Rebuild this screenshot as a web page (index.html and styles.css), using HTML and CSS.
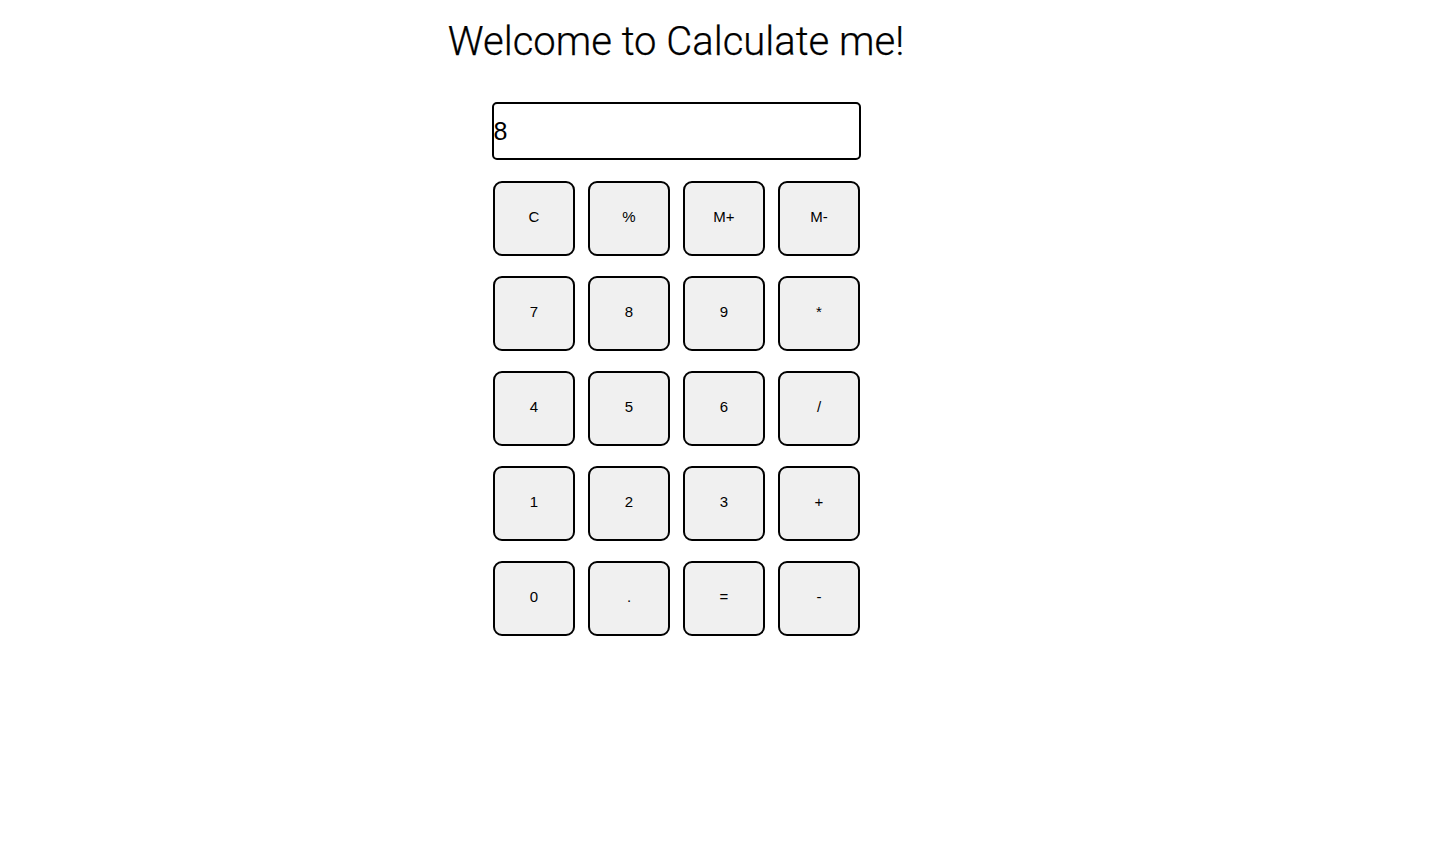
FILE: index.html
```html
<!DOCTYPE html>
<html>
<head>
<meta charset="utf-8">
<link rel="stylesheet" href="styles.css">
</head>
<body>
<main class="page">
  <h1 class="title">Welcome to Calculate me!</h1>
  <div class="calc">
    <div class="display">8</div>
    <div class="keys">
      <button class="key">C</button>
      <button class="key">%</button>
      <button class="key">M+</button>
      <button class="key">M-</button>
      <button class="key">7</button>
      <button class="key">8</button>
      <button class="key">9</button>
      <button class="key">*</button>
      <button class="key">4</button>
      <button class="key">5</button>
      <button class="key">6</button>
      <button class="key">/</button>
      <button class="key">1</button>
      <button class="key">2</button>
      <button class="key">3</button>
      <button class="key">+</button>
      <button class="key">0</button>
      <button class="key">.</button>
      <button class="key">=</button>
      <button class="key">-</button>
    </div>
  </div>
</main>
</body>
</html>
```
FILE: styles.css
```css
body {
  margin: 8px;
  background: #fff;
  font-family: "Liberation Sans", Arial, sans-serif;
}
.page {
  width: 1336px;
  display: flex;
  flex-direction: column;
  align-items: center;
}
.title {
  font-family: Roboto, sans-serif;
  font-weight: 300;
  font-size: 40px;
  line-height: 44px;
  margin: 12px 0 38px;
  color: #000;
  -webkit-text-stroke: 0.25px #000;
}
.calc {
  width: 369px;
  display: flex;
  flex-direction: column;
}
.display {
  box-sizing: border-box;
  height: 58px;
  border: 2px solid #000;
  border-radius: 5px;
  font-size: 25px;
  line-height: 54px;
  padding: 0;
  color: #000;
}
.keys {
  display: grid;
  grid-template-columns: repeat(4, 82px);
  column-gap: 13px;
  row-gap: 20px;
  margin-top: 21px;
  padding-left: 1px;
}
.key {
  box-sizing: border-box;
  width: 82px;
  height: 75px;
  background: #f0f0f0;
  border: 2px solid #000;
  border-radius: 9px;
  font-family: "Liberation Sans", Arial, sans-serif;
  font-size: 15px;
  color: #000;
  padding: 0 0 4px 1px;
}
```
